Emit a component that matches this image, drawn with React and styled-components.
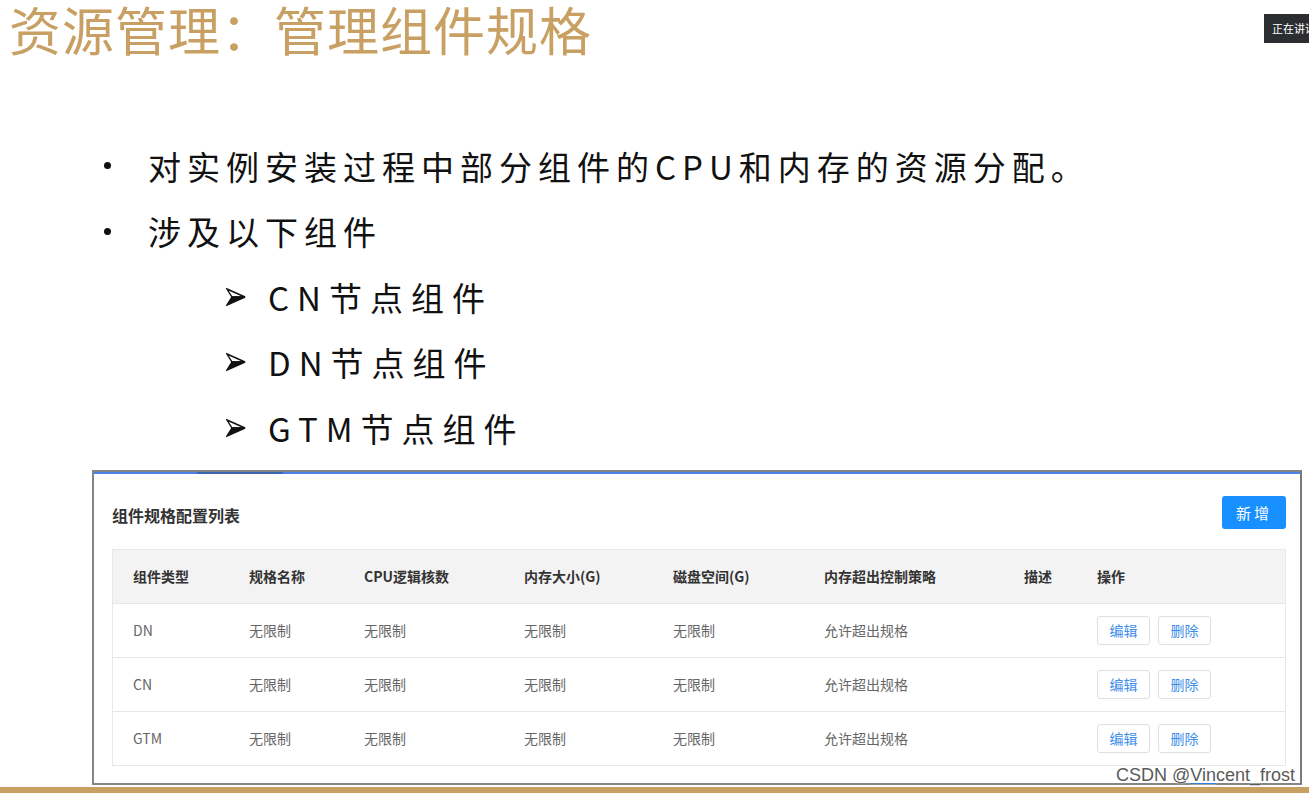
import React from 'react';
import styled, { createGlobalStyle } from 'styled-components';

const GlobalStyle = createGlobalStyle`
  html, body {
    margin: 0;
    padding: 0;
    background: #ffffff;
  }
  body {
    font-family: "Noto Sans CJK SC", "Noto Sans", sans-serif;
    overflow: hidden;
  }
`;

const Slide = styled.div`
  position: relative;
  width: 1309px;
  height: 794px;
  display: flex;
  flex-direction: column;
  overflow: hidden;
`;

const Title = styled.h1`
  margin: 0;
  padding: 1px 0 0 9px;
  font-size: 52px;
  line-height: 56px;
  font-weight: 400;
  letter-spacing: 1px;
  color: #c9a063;
  white-space: nowrap;
`;

const Speaking = styled.div`
  position: absolute;
  top: 14px;
  left: 1264px;
  width: 60px;
  height: 29px;
  background: #2b2d31;
  color: #ffffff;
  font-size: 11px;
  line-height: 29px;
  padding-left: 8px;
  white-space: nowrap;
`;

const Points = styled.ul`
  list-style: none;
  margin: 76px 0 0 0;
  padding: 0;
  display: flex;
  flex-direction: column;
`;

const Point = styled.li`
  display: flex;
  align-items: center;
  height: 65.5px;
  padding-left: ${p => (p.$sub ? 226 : 104)}px;
  font-size: 33px;
  letter-spacing: ${p => (p.$sub ? 8 : 6)}px;
  color: #111111;
  white-space: nowrap;
`;

const Marker = styled.span`
  display: inline-flex;
  align-items: center;
  width: ${p => (p.$sub ? 42 : 44)}px;
  flex-shrink: 0;
`;

const Dot = styled.i`
  display: block;
  width: 7px;
  height: 7px;
  border-radius: 50%;
  background: #111111;
`;

const Arrow = () => (
  <svg width="20" height="20" viewBox="0 0 20 20">
    <path d="M1 2 L19 10 L6 10 Z" fill="#fff" stroke="#111" strokeWidth="1.4" strokeLinejoin="miter" />
    <path d="M1 18 L19 10 L6 10 Z" fill="#111" stroke="#111" strokeWidth="1.4" />
  </svg>
);

const Panel = styled.section`
  position: relative;
  margin: 9px 0 0 92px;
  width: 1210px;
  height: 315px;
  box-sizing: border-box;
  border: 2px solid #858585;
  border-right-color: #7a7a7a;
  box-shadow: inset 0 2px 0 #4d82e6;
  background: #ffffff;
  padding: 2px 14px 17px 18px;
  display: flex;
  flex-direction: column;

  &::before {
    content: '';
    position: absolute;
    top: 0;
    left: 103px;
    width: 86px;
    height: 2px;
    background: #3c66b0;
  }
`;

const PanelHead = styled.div`
  height: 75px;
  flex-shrink: 0;
  display: flex;
  align-items: center;
  justify-content: space-between;
  padding-top: 7px;
  box-sizing: border-box;
`;

const PanelTitle = styled.h2`
  margin: 0;
  font-size: 16px;
  font-weight: 700;
  color: #333333;
`;

const PrimaryButton = styled.button`
  width: 64px;
  height: 33px;
  border: none;
  border-radius: 3px;
  background: #1890ff;
  color: #ffffff;
  font-family: inherit;
  font-size: 15px;
  letter-spacing: 3px;
  padding-left: 6px;
  margin-top: -4px;
`;

const Table = styled.div`
  border: 1px solid #e8e8e8;
  display: flex;
  flex-direction: column;
`;

const Row = styled.div`
  display: grid;
  grid-template-columns: 116px 115px 160px 149px 151px 200px 73px 1fr;
  align-items: center;
  height: 53px;
  padding-left: 20px;
  background: ${p => (p.$head ? '#f3f3f3' : '#ffffff')};
  border-top: ${p => (p.$first ? 'none' : '1px solid #e6e6e6')};
  font-size: 14px;
  font-weight: ${p => (p.$head ? 700 : 400)};
  color: ${p => (p.$head ? '#333333' : '#666666')};
  white-space: nowrap;
`;

const Actions = styled.div`
  display: flex;
  gap: 8px;
`;

const GhostButton = styled.button`
  width: 53px;
  height: 29px;
  border: 1px solid #dcdfe6;
  border-radius: 3px;
  background: #ffffff;
  color: #3d8ee8;
  font-family: inherit;
  font-size: 14px;
  padding: 0;
`;

const GoldBar = styled.div`
  margin-top: 2px;
  height: 6px;
  background: #c9a063;
`;

const Watermark = styled.div`
  position: absolute;
  right: 14px;
  bottom: 8px;
  font-family: "Liberation Sans", Arial, sans-serif;
  font-size: 18px;
  color: #5a5a5a;
  text-shadow: 0 0 2px #ffffff;

  span {
    text-decoration: underline;
    text-decoration-color: #2f7de0;
    text-underline-offset: 2px;
  }
`;

const rows = [
  { type: 'DN' },
  { type: 'CN' },
  { type: 'GTM' },
];

const headers = ['组件类型', '规格名称', 'CPU逻辑核数', '内存大小(G)', '磁盘空间(G)', '内存超出控制策略', '描述', '操作'];

export default function App() {
  return (
    <>
      <GlobalStyle />
      <Slide>
        <Title>资源管理：管理组件规格</Title>
        <Speaking>正在讲话</Speaking>
        <Points>
          <Point><Marker><Dot /></Marker>对实例安装过程中部分组件的CPU和内存的资源分配。</Point>
          <Point><Marker><Dot /></Marker>涉及以下组件</Point>
          <Point $sub><Marker $sub><Arrow /></Marker>CN节点组件</Point>
          <Point $sub><Marker $sub><Arrow /></Marker>DN节点组件</Point>
          <Point $sub><Marker $sub><Arrow /></Marker>GTM节点组件</Point>
        </Points>
        <Panel>
          <PanelHead>
            <PanelTitle>组件规格配置列表</PanelTitle>
            <PrimaryButton>新增</PrimaryButton>
          </PanelHead>
          <Table>
            <Row $head $first>
              {headers.map(h => <div key={h}>{h}</div>)}
            </Row>
            {rows.map(r => (
              <Row key={r.type}>
                <div>{r.type}</div>
                <div>无限制</div>
                <div>无限制</div>
                <div>无限制</div>
                <div>无限制</div>
                <div>允许超出规格</div>
                <div></div>
                <Actions>
                  <GhostButton>编辑</GhostButton>
                  <GhostButton>删除</GhostButton>
                </Actions>
              </Row>
            ))}
          </Table>
        </Panel>
        <GoldBar />
        <Watermark>CSDN @<span>Vin</span>cent_frost</Watermark>
      </Slide>
    </>
  );
}
